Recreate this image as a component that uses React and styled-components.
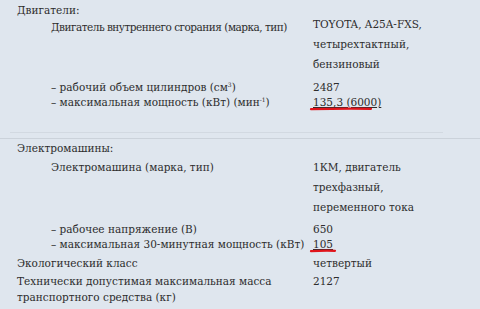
import styled, { createGlobalStyle } from "styled-components";

const GlobalStyle = createGlobalStyle`
  html, body {
    margin: 0;
    padding: 0;
    background: #dfe6ee;
  }
  body {
    font-family: "DejaVu Serif", "Liberation Serif", serif;
    color: #2d2d2d;
  }
`;

const Page = styled.div`
  width: 480px;
  height: 309px;
  overflow: hidden;
  background: #dfe6ee;
  font-size: 10.5px;
`;

const Section = styled.section`
  padding: ${(p) => p.$pad || "0"};
`;

const Divider = styled.div`
  margin: ${(p) => p.$top || 0}px 37px 5px 10px;
  height: 1px;
  background: #d2d9e1;
`;

const Split = styled.div`
  height: 1px;
  background: #cbd2da;
`;

const Heading = styled.div`
  padding-left: 17px;
  line-height: 16px;
`;

const Row = styled.div`
  display: grid;
  padding-left: ${(p) => (p.$indent ? "51px" : "17px")};
  grid-template-columns: ${(p) => (p.$indent ? "262px" : "296px")} 1fr;
  margin-top: ${(p) => p.$gap || 0}px;
  line-height: ${(p) => p.$lh || 15}px;
`;

const Label = styled.div`
  letter-spacing: ${(p) => p.$tight || 0}px;
`;

const Values = styled.div`
  display: flex;
  flex-direction: column;
  margin-top: ${(p) => -(p.$lift || 0)}px;
`;

const ValueLine = styled.span`
  line-height: ${(p) => p.$lh || 15}px;
`;

const Marked = styled.span`
  position: relative;
  text-decoration: underline;
  text-underline-offset: 1px;
  text-decoration-thickness: 1px;

  svg {
    position: absolute;
    left: -3px;
    top: 11px;
    overflow: visible;
  }
`;

const RedMark = ({ width }) => (
  <svg width={width} height="4" viewBox={`0 0 ${width} 4`}>
    <path
      d={`M1 2.2 Q ${width / 2} 1.4 ${width - 1} 1.8`}
      stroke="#e0141b"
      strokeWidth="2.2"
      fill="none"
      strokeLinecap="round"
    />
  </svg>
);

const Sup = styled.sup`
  font-size: 6px;
  line-height: 0;
  vertical-align: 4px;
`;

export default function App() {
  return (
    <Page>
      <GlobalStyle />
      <Section $pad="2px 0 0">
        <Heading>Двигатели:</Heading>
        <Row $indent $gap={1} $lh={16}>
          <Label $tight={-0.5}>Двигатель внутреннего сгорания (марка, тип)</Label>
          <Values $lift={5}>
            <ValueLine $lh={20}>TOYOTA, A25A-FXS,</ValueLine>
            <ValueLine $lh={20}>четырехтактный,</ValueLine>
            <ValueLine $lh={20}>бензиновый</ValueLine>
          </Values>
        </Row>
        <Row $indent $gap={6}>
          <Label>
            – рабочий объем цилиндров (см<Sup>3</Sup>)
          </Label>
          <Values>
            <ValueLine>2487</ValueLine>
          </Values>
        </Row>
        <Row $indent>
          <Label>
            – максимальная мощность (кВт) (мин<Sup>-1</Sup>)
          </Label>
          <Values>
            <ValueLine>
              <Marked>
                135,3 (6000)
                <RedMark width={62} />
              </Marked>
            </ValueLine>
          </Values>
        </Row>
        <Divider $top={22} />
      </Section>
      <Split />
      <Section $pad="1px 0 0">
        <Heading>Электромашины:</Heading>
        <Row $indent $gap={3} $lh={16}>
          <Label>Электромашина (марка, тип)</Label>
          <Values $lift={2}>
            <ValueLine $lh={20}>1КМ, двигатель</ValueLine>
            <ValueLine $lh={20}>трехфазный,</ValueLine>
            <ValueLine $lh={20}>переменного тока</ValueLine>
          </Values>
        </Row>
        <Row $indent $gap={5}>
          <Label>– рабочее напряжение (В)</Label>
          <Values>
            <ValueLine>650</ValueLine>
          </Values>
        </Row>
        <Row $indent>
          <Label>– максимальная 30-минутная мощность (кВт)</Label>
          <Values>
            <ValueLine>
              <Marked>
                105
                <RedMark width={26} />
              </Marked>
            </ValueLine>
          </Values>
        </Row>
        <Row $gap={4}>
          <Label>Экологический класс</Label>
          <Values>
            <ValueLine>четвертый</ValueLine>
          </Values>
        </Row>
        <Row $gap={2} $lh={16}>
          <Label>
            Технически допустимая максимальная масса
            <br />
            транспортного средства (кг)
          </Label>
          <Values>
            <ValueLine $lh={16}>2127</ValueLine>
          </Values>
        </Row>
      </Section>
    </Page>
  );
}
